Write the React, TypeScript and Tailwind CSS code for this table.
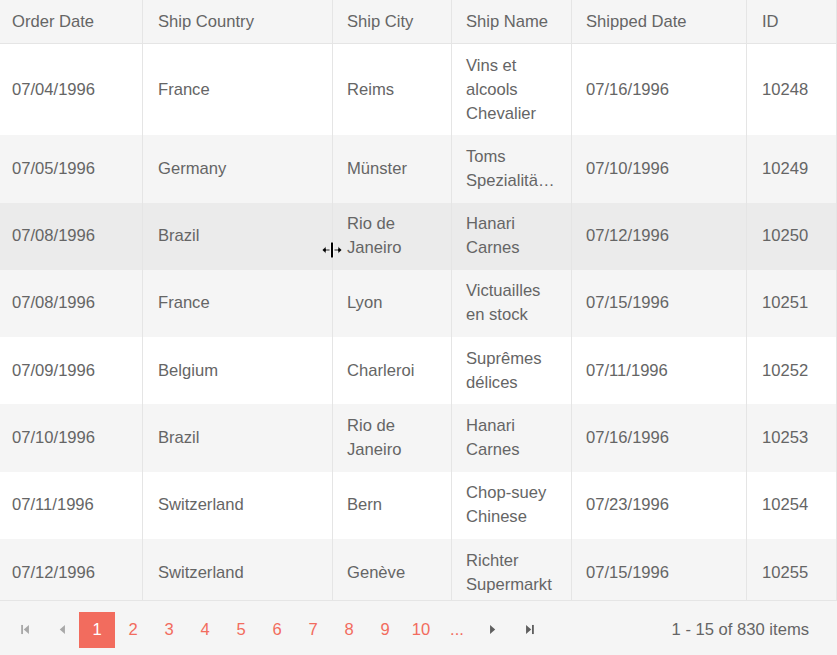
import React from 'react';

type Order = {
    orderDate: string;
    country: string;
    city: string;
    shipName: React.ReactNode;
    shippedDate: string;
    id: number;
};

const orders: Order[] = [
    { orderDate: '07/04/1996', country: 'France', city: 'Reims', shipName: 'Vins et alcools Chevalier', shippedDate: '07/16/1996', id: 10248 },
    {
        orderDate: '07/05/1996',
        country: 'Germany',
        city: 'Münster',
        shipName: (
            <>
                <div>Toms</div>
                <div className="truncate">Spezialitäten</div>
            </>
        ),
        shippedDate: '07/10/1996',
        id: 10249
    },
    { orderDate: '07/08/1996', country: 'Brazil', city: 'Rio de Janeiro', shipName: 'Hanari Carnes', shippedDate: '07/12/1996', id: 10250 },
    { orderDate: '07/08/1996', country: 'France', city: 'Lyon', shipName: 'Victuailles en stock', shippedDate: '07/15/1996', id: 10251 },
    { orderDate: '07/09/1996', country: 'Belgium', city: 'Charleroi', shipName: 'Suprêmes délices', shippedDate: '07/11/1996', id: 10252 },
    { orderDate: '07/10/1996', country: 'Brazil', city: 'Rio de Janeiro', shipName: 'Hanari Carnes', shippedDate: '07/16/1996', id: 10253 },
    { orderDate: '07/11/1996', country: 'Switzerland', city: 'Bern', shipName: 'Chop-suey Chinese', shippedDate: '07/23/1996', id: 10254 },
    { orderDate: '07/12/1996', country: 'Switzerland', city: 'Genève', shipName: 'Richter Supermarkt', shippedDate: '07/15/1996', id: 10255 }
];

const columns = [
    { title: 'Order Date', width: 'w-[142px]', pad: 'pl-[12px] pr-[12px]' },
    { title: 'Ship Country', width: 'w-[190px]', pad: 'pl-[15px] pr-[12px] border-l border-[#e5e5e5]' },
    { title: 'Ship City', width: 'w-[119px]', pad: 'pl-[14px] pr-[12px] border-l border-[#e5e5e5]' },
    { title: 'Ship Name', width: 'w-[120px]', pad: 'pl-[14px] pr-[12px] border-l border-[#e5e5e5]' },
    { title: 'Shipped Date', width: 'w-[175px]', pad: 'pl-[14px] pr-[12px] border-l border-[#e5e5e5]' },
    { title: 'ID', width: 'w-[91px]', pad: 'pl-[15px] pr-[12px] border-l border-r border-[#e5e5e5]' }
];

const PagerArrow = ({ dir, bar, color }: { dir: 'left' | 'right'; bar?: boolean; color: string }) => (
    <svg width="13" height="13" viewBox="0 0 12 12" fill={color}>
        {dir === 'left' ? (
            <>
                {bar && <rect x="2" y="1.8" width="1.7" height="8.4" />}
                <polygon points="9.2,1.8 9.2,10.2 4.4,6" />
            </>
        ) : (
            <>
                <polygon points="2.8,1.8 2.8,10.2 7.6,6" />
                {bar && <rect x="8.3" y="1.8" width="1.7" height="8.4" />}
            </>
        )}
    </svg>
);

const ResizeCursor = () => (
    <svg width="22" height="18" viewBox="0 0 22 18" className="absolute left-[321px] top-[241px] pointer-events-none">
        <rect x="9.5" y="1" width="3" height="16" fill="#fff" />
        <rect x="10" y="1.5" width="2" height="15" fill="#000" />
        <polygon points="1,9 5,5.5 5,8.2 8.8,8.2 8.8,9.8 5,9.8 5,12.5" fill="#000" stroke="#fff" strokeWidth="0.6" />
        <polygon points="21,9 17,5.5 17,8.2 13.2,8.2 13.2,9.8 17,9.8 17,12.5" fill="#000" stroke="#fff" strokeWidth="0.6" />
    </svg>
);

export default function App() {
    const pages = ['1', '2', '3', '4', '5', '6', '7', '8', '9', '10', '...'];

    return (
        <div
            className="relative w-[837px] h-[655px] flex flex-col bg-white text-[#656565] text-[16.6px] leading-[24px] overflow-hidden"
            style={{ fontFamily: '"Liberation Sans", Arial, sans-serif' }}
        >
            {/* Header */}
            <div className="flex h-[44px] bg-[#f5f5f5] border-b border-[#e5e5e5] shrink-0">
                {columns.map((col) => (
                    <div key={col.title} className={`${col.width} ${col.pad} flex items-center shrink-0 pt-[1px]`}>
                        {col.title}
                    </div>
                ))}
            </div>

            {/* Body */}
            <div className="flex-1 overflow-hidden">
                {orders.map((o, idx) => {
                    const bg = idx === 2 ? 'bg-[#ebebeb]' : idx % 2 === 1 ? 'bg-[#f5f5f5]' : 'bg-white';
                    const cells: React.ReactNode[] = [o.orderDate, o.country, o.city, o.shipName, o.shippedDate, o.id];
                    return (
                        <div key={o.id} className={`flex ${bg}`}>
                            {cells.map((cell, ci) => (
                                <div
                                    key={ci}
                                    className={`${columns[ci].width} ${columns[ci].pad} shrink-0 py-[9.65px] flex flex-col justify-center min-w-0`}
                                >
                                    <div className="min-w-0">{cell}</div>
                                </div>
                            ))}
                        </div>
                    );
                })}
            </div>

            {/* Pager */}
            <div className="h-[55px] shrink-0 bg-[#f5f5f5] border-t border-[#e5e5e5] flex items-center pl-[7px] pr-[28px] pt-[3px]">
                <div className="w-[36px] h-[36px] flex items-center justify-center">
                    <PagerArrow dir="left" bar color="#a8a8a8" />
                </div>
                <div className="w-[36px] h-[36px] flex items-center justify-center">
                    <PagerArrow dir="left" color="#a8a8a8" />
                </div>
                {pages.map((p, i) => (
                    <div
                        key={p}
                        className={`w-[36px] h-[36px] flex items-center justify-center ${
                            i === 0 ? 'bg-[#f26c5e] text-white' : 'text-[#f26c5e]'
                        }`}
                    >
                        {p}
                    </div>
                ))}
                <div className="w-[36px] h-[36px] flex items-center justify-center">
                    <PagerArrow dir="right" color="#5f5f5f" />
                </div>
                <div className="w-[36px] h-[36px] flex items-center justify-center">
                    <PagerArrow dir="right" bar color="#5f5f5f" />
                </div>
                <div className="ml-auto">1 - 15 of 830 items</div>
            </div>

            <ResizeCursor />
        </div>
    );
}
